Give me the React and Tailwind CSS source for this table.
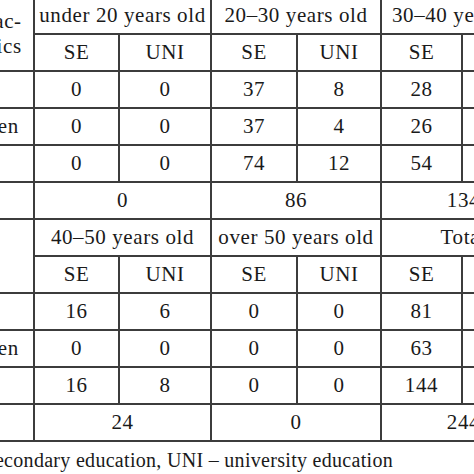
const groupsTop = ['under 20 years old', '20–30 years old', '30–40 years old'];
const groupsBottom = ['40–50 years old', 'over 50 years old', 'Total'];

const topRows = [
  ['Men', '0', '0', '37', '8', '28', '7'],
  ['Women', '0', '0', '37', '4', '26', '12'],
  ['All', '0', '0', '74', '12', '54', '19'],
];
const topTotals = ['0', '86', '134'];

const bottomRows = [
  ['Men', '16', '6', '0', '0', '81', '21'],
  ['Women', '0', '0', '0', '0', '63', '16'],
  ['All', '16', '8', '0', '0', '144', '37'],
];
const bottomTotals = ['24', '0', '244'];

const cell = 'border-2 border-[#3c3c3c] text-center align-middle px-1 whitespace-nowrap';
const labelCell = 'border-2 border-[#3c3c3c] text-left align-middle pl-[5px] whitespace-nowrap';

function Section({ label, groups, rows, totals }) {
  return (
    <>
      <tr className="h-[37px]">
        <td rowSpan={2} className={labelCell + ' leading-[25px]'}>
          {label}
        </td>
        {groups.map((g) => (
          <td key={g} colSpan={2} className={cell}>
            {g}
          </td>
        ))}
      </tr>
      <tr className="h-[37px]">
        {groups.map((g) => (
          <>
            <td key={g + 'se'} className={cell}>SE</td>
            <td key={g + 'uni'} className={cell}>UNI</td>
          </>
        ))}
      </tr>
      {rows.map((r) => (
        <tr key={r[0]} className="h-[37px]">
          <td className={labelCell}>{r[0]}</td>
          {r.slice(1).map((v, i) => (
            <td key={i} className={cell}>{v}</td>
          ))}
        </tr>
      ))}
      <tr className="h-[37px]">
        <td className={labelCell}></td>
        {totals.map((t, i) => (
          <td key={i} colSpan={2} className={cell}>{t}</td>
        ))}
      </tr>
    </>
  );
}

export default function App() {
  return (
    <div className="w-[474px] h-[474px] overflow-hidden bg-white text-[#1a1a1a] text-[21px] tracking-[0.6px] leading-none" style={{ fontFamily: '"Liberation Serif", "Times New Roman", serif' }}>
      <div className="ml-[-56px] mt-[-4px]">
        <table className="table-fixed border-collapse w-[601px]">
          <colgroup>
            <col className="w-[89px]" />
            <col className="w-[85px]" />
            <col className="w-[92px]" />
            <col className="w-[86px]" />
            <col className="w-[84px]" />
            <col className="w-[81px]" />
            <col className="w-[84px]" />
          </colgroup>
          <tbody>
            <Section label={<>Charac-<br />teristics</>} groups={groupsTop} rows={topRows} totals={topTotals} />
            <Section label="" groups={groupsBottom} rows={bottomRows} totals={bottomTotals} />
          </tbody>
        </table>
        <p className="mt-[8px] ml-[-2px] whitespace-nowrap text-[20px] tracking-[0.3px]">SE – secondary education, UNI – university education</p>
      </div>
    </div>
  );
}
